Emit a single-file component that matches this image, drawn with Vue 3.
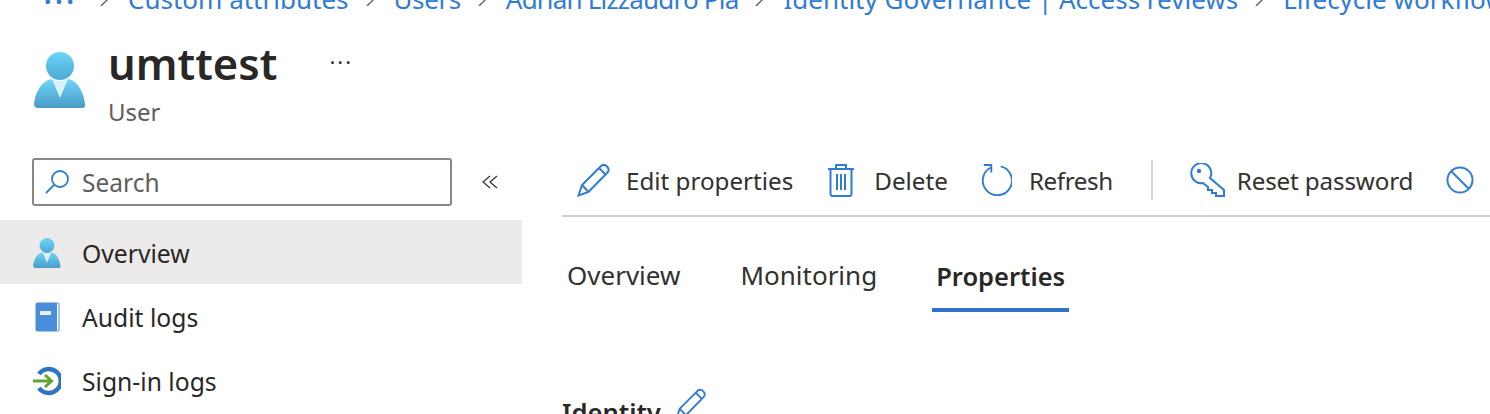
<script setup>
const crumbs = [
  { text: 'Custom attributes' },
  { text: 'Users', narrow: true },
  { text: 'Adrian Lizzaudro Pla', tight: true },
  { text: 'Identity Governance | Access reviews' },
  { text: 'Lifecycle workflows' }
]
</script>

<template>
  <div class="page">
    <nav class="crumbs">
      <span class="crumb-more">···</span>
      <template v-for="c in crumbs" :key="c.text">
        <svg class="crumb-sep" viewBox="0 0 10 18"><path d="M1 0 L10 9 L1 18" /></svg>
        <a class="crumb" :class="{ tight: c.tight, narrow: c.narrow }">{{ c.text }}</a>
      </template>
    </nav>

    <header class="head">
      <svg class="head-icon" viewBox="0 0 52 56">
        <defs>
          <linearGradient id="skin" x1="0" y1="0" x2="0" y2="1">
            <stop offset="0" stop-color="#6dd5f8" />
            <stop offset="1" stop-color="#4ea8d2" />
          </linearGradient>
          <linearGradient id="suit" x1="0" y1="0" x2="0" y2="1">
            <stop offset="0" stop-color="#6fd6f8" />
            <stop offset="1" stop-color="#4a9bc5" />
          </linearGradient>
          <g id="person">
            <circle cx="26" cy="14" r="14" fill="url(#skin)" />
            <path d="M17 27 C6 30 1 42 0 52 Q0 56 4 56 H48 Q52 56 51 52 C50 42 45 30 35 27 L26 31 Z" fill="url(#suit)" />
            <path d="M18 27 Q26 31 34 27 L26 46 Z" fill="#d9f3fb" />
          </g>
        </defs>
        <use href="#person" />
      </svg>
      <div class="head-text">
        <div class="title-row">
          <h1>umttest</h1>
          <span class="title-more">···</span>
        </div>
        <div class="subtitle">User</div>
      </div>
    </header>

    <div class="body">
      <aside class="side">
        <div class="search-row">
          <div class="search">
            <svg class="search-icon" viewBox="0 0 24 24"><circle cx="15" cy="9" r="8" /><path d="M9 15 L1 23" /></svg>
            <span>Search</span>
          </div>
          <svg class="collapse" viewBox="0 0 16 14"><path d="M8 1 L1 7 L8 13 M15 1 L8 7 L15 13" /></svg>
        </div>
        <a class="nav-item active">
          <svg class="nav-icon" viewBox="0 0 52 56"><use href="#person" /></svg>
          Overview
        </a>
        <a class="nav-item">
          <svg class="nav-icon" viewBox="0 0 28 30">
            <rect x="3" y="1" width="23" height="28" rx="1" fill="#fff" stroke="#4a8ad8" />
            <rect x="3" y="1" width="21" height="28" rx="1" fill="#4a8ddb" />
            <rect x="7" y="9" width="11" height="4" fill="#e8f1fb" />
          </svg>
          Audit logs
        </a>
        <a class="nav-item">
          <svg class="nav-icon" viewBox="0 0 28 30">
            <path d="M6 8 A12 12 0 1 1 6 22" fill="none" stroke="#2f73c4" stroke-width="4.4" />
            <path d="M0 15 H18 M12 9 L18.500 15 L12 21" fill="none" stroke="#62a52e" stroke-width="3" />
          </svg>
          Sign-in logs
        </a>
      </aside>

      <main class="main">
        <div class="toolbar">
          <button class="tool">
            <svg class="ico pencil" viewBox="0 0 34 34"><path d="M1.500 32.500 L5 22 L24 3 Q27 .5 30 3.500 Q33 6.500 30.500 9.500 L11.500 29 Z M5 22 L11.500 29 M22 5 L28.500 11.500" /></svg>
            Edit properties
          </button>
          <button class="tool trash-tool">
            <svg class="ico trash" viewBox="0 0 28 34"><path d="M1 6 H27 M9 6 V2 H19 V6 M3.500 6 V31 Q3.500 33 5.500 33 H22.500 Q24.500 33 24.500 31 V6 M10 11 V27 M14 11 V27 M18 11 V27" /></svg>
            Delete
          </button>
          <button class="tool refresh-tool">
            <svg class="ico refresh" viewBox="0 0 34 34"><path d="M11 4 A15.500 15.500 0 1 0 22 2.500 M4 1 H12 V9" /></svg>
            Refresh
          </button>
          <span class="divider"></span>
          <button class="tool key-tool">
            <svg class="ico key" viewBox="0 0 36 34"><path d="M21 15 A10 10 0 1 0 14 20 L19 24 V27 H23 V30 H27 V33 H35 V27 Z" /><circle cx="10" cy="8" r="1.200" fill="#2f7bd6" /></svg>
            Reset password
          </button>
          <button class="tool">
            <svg class="ico block" viewBox="0 0 28 28"><circle cx="14" cy="14" r="12.500" /><path d="M5 5 L23 23" /></svg>
          </button>
        </div>

        <div class="tabs">
          <a class="tab">Overview</a>
          <a class="tab">Monitoring</a>
          <a class="tab current">Properties</a>
        </div>

        <div class="section">
          <h2>Identity</h2>
          <svg class="ico section-edit" viewBox="0 0 34 34"><path d="M1.500 32.500 L5 22 L24 3 Q27 .5 30 3.500 Q33 6.500 30.500 9.500 L11.500 29 Z M5 22 L11.500 29 M22 5 L28.500 11.500" /></svg>
        </div>
      </main>
    </div>
  </div>
</template>

<style scoped>
.page {
  width: 1490px;
  height: 414px;
  overflow: hidden;
  background: #fff;
  color: #323130;
  font-family: "Noto Sans", sans-serif;
  font-size: 25px;
}

.crumbs {
  display: flex;
  align-items: center;
  height: 18px;
  margin-top: -10px;
  padding-left: 44px;
  white-space: nowrap;
  color: #2f7bd6;
  font-size: 26px;
  line-height: 18px;
}

.crumb {
  flex: none;
}

.crumb.tight {
  letter-spacing: -0.8px;
}

.crumb.narrow {
  letter-spacing: -0.4px;
}

.crumb-more {
  flex: none;
  width: 39px;
  padding-top: 4px;
  font-weight: 700;
  letter-spacing: 4px;
}

.crumb-sep {
  flex: none;
  width: 10px;
  height: 18px;
  margin: -4px 18px 0 17px;
  fill: none;
  stroke: #605e5c;
  stroke-width: 1.400;
}

.head {
  display: flex;
  height: 150px;
  padding: 44px 0 0 34px;
  box-sizing: border-box;
}

.head-icon {
  width: 52px;
  height: 56px;
}

.head-text {
  margin-left: 22px;
  margin-top: -19px;
}

.title-row {
  display: flex;
  align-items: center;
}

h1 {
  margin: 0;
  font-size: 43.500px;
  font-weight: 600;
  line-height: 60px;
  color: #292827;
}

.title-more {
  margin-left: 52px;
  margin-top: -4px;
  font-size: 22px;
  letter-spacing: 2px;
}

.subtitle {
  margin-top: 1px;
  font-size: 24px;
  line-height: 36px;
  color: #605e5c;
}

.body {
  display: grid;
  grid-template-columns: 522px 1fr;
  column-gap: 40px;
}

.search-row {
  display: flex;
  align-items: center;
  padding: 0 0 14px 32px;
}

.search {
  display: flex;
  align-items: center;
  width: 420px;
  height: 48px;
  box-sizing: border-box;
  border: 2px solid #8a8886;
  border-radius: 3px;
  padding-left: 11px;
  color: #605e5c;
  font-size: 24.500px;
}

.search-icon {
  width: 24px;
  height: 24px;
  margin-right: 13px;
  fill: none;
  stroke: #2f7bd6;
  stroke-width: 1.800;
}

.collapse {
  width: 16px;
  height: 14px;
  margin-left: 30px;
  fill: none;
  stroke: #323130;
  stroke-width: 1.200;
}

.nav-item {
  display: flex;
  align-items: center;
  height: 64px;
  box-sizing: border-box;
  padding: 2px 0 0 33px;
  color: #292827;
  font-size: 24.700px;
}

.nav-item.active {
  background: #edebe9;
}

.nav-icon {
  width: 28px;
  height: 30px;
  margin-right: 21px;
}

.toolbar {
  display: flex;
  align-items: center;
  height: 64px;
  margin-top: -10px;
  border-bottom: 2px solid #ccc;
  padding: 0 0 3px 15px;
  white-space: nowrap;
  font-size: 24.200px;
}

.tool {
  display: flex;
  align-items: center;
  gap: 15px;
  margin-right: 33px;
  padding: 0;
  border: 0;
  background: none;
  font: inherit;
  color: #323130;
}

.trash-tool {
  gap: 19px;
  margin-left: 1px;
  margin-right: 32px;
}

.refresh-tool {
  gap: 17px;
  margin-right: 32px;
  letter-spacing: -0.4px;
}

.key-tool {
  gap: 12px;
  letter-spacing: -0.15px;
}

.ico {
  fill: none;
  stroke: #2f7bd6;
  stroke-width: 2;
}

.pencil {
  width: 34px;
  height: 34px;
}

.trash {
  width: 28px;
  height: 34px;
}

.refresh {
  width: 32px;
  height: 32px;
}

.key {
  width: 36px;
  height: 34px;
}

.block {
  width: 28px;
  height: 28px;
}

.divider {
  width: 2px;
  height: 40px;
  margin: 0 36px 0 6px;
  background: #d6d6d6;
}

.tabs {
  display: flex;
  gap: 60px;
  margin-top: 39px;
  padding-left: 5px;
}

.tab {
  padding-bottom: 14px;
  border-bottom: 4px solid transparent;
  font-size: 26px;
  line-height: 38px;
}

.tab.current {
  margin-left: -5px;
  padding: 1px 4px 13px;
  font-size: 25.500px;
  font-weight: 600;
  border-bottom-color: #2f73c9;
  color: #292827;
}

.section {
  display: flex;
  align-items: center;
  gap: 14px;
  margin-top: 76px;
}

h2 {
  margin: 0;
  font-size: 25.600px;
  font-weight: 600;
  line-height: 36px;
  color: #292827;
}

.section-edit {
  width: 32px;
  height: 32px;
  margin-bottom: 18px;
}
</style>

<style>
body {
  background: #fff;
}
</style>
